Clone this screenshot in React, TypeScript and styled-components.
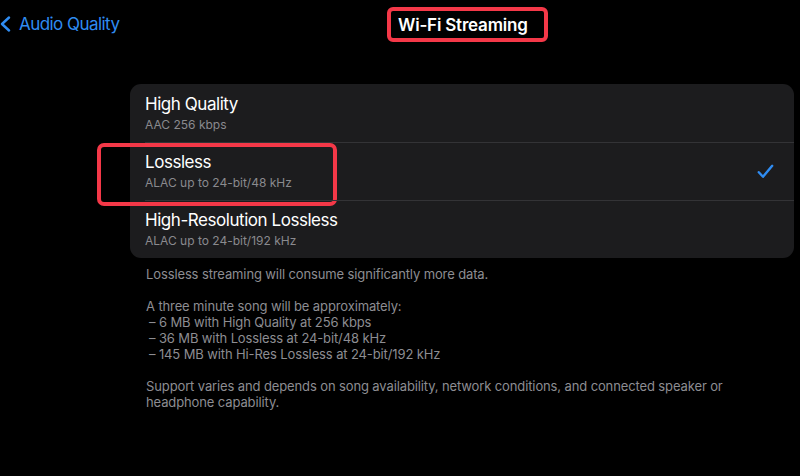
import React from "react";
import styled, { createGlobalStyle } from "styled-components";

const Global = createGlobalStyle`
  html, body { margin: 0; padding: 0; background: #000; }
  body { font-family: Inter, "Noto Sans", "Liberation Sans", sans-serif; -webkit-font-smoothing: antialiased; }
`;

const Page = styled.div`
  width: 800px;
  height: 476px;
  background: #000;
  overflow: hidden;
`;

const Header = styled.header`
  display: grid;
  grid-template-columns: 387px auto 1fr;
  align-items: center;
  height: 49px;
`;

const BackLink = styled.a`
  display: flex;
  align-items: center;
  gap: 8px;
  color: #2f8cf2;
  font-size: 17px;
  letter-spacing: -0.55px;
  text-decoration: none;
  margin-top: -1px;
`;

const Title = styled.h1`
  margin: 0;
  box-sizing: border-box;
  height: 35px;
  display: flex;
  align-items: center;
  padding: 0 16px 0 7px;
  border: 4px solid #f43848;
  border-radius: 6px;
  color: #fff;
  font-size: 17px;
  font-weight: 600;
  letter-spacing: -0.2px;
`;

const Content = styled.main`
  padding: 35px 6px 0 130px;
`;

const Card = styled.div`
  background: #1c1c1e;
  border-radius: 11px;
  display: flex;
  flex-direction: column;
`;

const Row = styled.div<{ $first?: boolean }>`
  position: relative;
  height: 58px;
  box-sizing: border-box;
  display: flex;
  align-items: center;
  padding: 0 20px 0 15px;
  &::before {
    content: "";
    display: ${(p) => (p.$first ? "none" : "block")};
    position: absolute;
    left: 15px;
    right: 0;
    top: 0;
    height: 1px;
    background: #333336;
  }
`;

const RowText = styled.div`
  flex: 1;
  display: flex;
  flex-direction: column;
  gap: 3px;
`;

const RowTitle = styled.div`
  color: #fff;
  font-size: 17px;
  line-height: 20px;
  letter-spacing: -0.45px;
`;

const RowSub = styled.div`
  color: #8a8a8e;
  font-size: 12px;
  line-height: 15px;
`;

const Highlight = styled.div`
  position: absolute;
  left: -33px;
  top: 1px;
  width: 240px;
  height: 63px;
  box-sizing: border-box;
  border: 4px solid #f43848;
  border-radius: 7px;
  pointer-events: none;
`;

const Footer = styled.div`
  margin-top: 8px;
  padding-left: 16px;
  color: #8d8d92;
  font-size: 13px;
  line-height: 16px;
  letter-spacing: -0.12px;
  display: flex;
  flex-direction: column;
  gap: 16px;
`;

const Para = styled.p`
  margin: 0;
`;

const Line = styled.span<{ $indent?: boolean }>`
  display: block;
  padding-left: ${(p) => (p.$indent ? "3px" : "0")};
`;

const Check = () => (
  <svg width="17" height="15" viewBox="0 0 17 15" fill="none">
    <path d="M1.8 8.2 L6 12.8 L15.2 1.8" stroke="#2f8cf2" strokeWidth="2.4" strokeLinecap="round" strokeLinejoin="round" />
  </svg>
);

const Chevron = () => (
  <svg width="11" height="16" viewBox="0 0 11 16" fill="none">
    <path d="M9 1.5 L2 8 L9 14.5" stroke="#2f8cf2" strokeWidth="2.4" strokeLinecap="round" strokeLinejoin="round" />
  </svg>
);

const options = [
  { title: "High Quality", sub: "AAC 256 kbps" },
  { title: "Lossless", sub: "ALAC up to 24-bit/48 kHz", selected: true },
  { title: "High-Resolution Lossless", sub: "ALAC up to 24-bit/192 kHz" },
];

export default function App() {
  return (
    <Page>
      <Global />
      <Header>
        <BackLink>
          <Chevron />
          Audio Quality
        </BackLink>
        <Title>Wi-Fi Streaming</Title>
      </Header>
      <Content>
        <Card>
          {options.map((o, i) => (
            <Row key={o.title} $first={i === 0}>
              <RowText>
                <RowTitle>{o.title}</RowTitle>
                <RowSub>{o.sub}</RowSub>
              </RowText>
              {o.selected && <Check />}
              {o.selected && <Highlight />}
            </Row>
          ))}
        </Card>
        <Footer>
          <Para>Lossless streaming will consume significantly more data.</Para>
          <Para>
            <Line>A three minute song will be approximately:</Line>
            <Line $indent>– 6 MB with High Quality at 256 kbps</Line>
            <Line $indent>– 36 MB with Lossless at 24-bit/48 kHz</Line>
            <Line $indent>– 145 MB with Hi-Res Lossless at 24-bit/192 kHz</Line>
          </Para>
          <Para>
            <Line>Support varies and depends on song availability, network conditions, and connected speaker or</Line>
            <Line>headphone capability.</Line>
          </Para>
        </Footer>
      </Content>
    </Page>
  );
}
